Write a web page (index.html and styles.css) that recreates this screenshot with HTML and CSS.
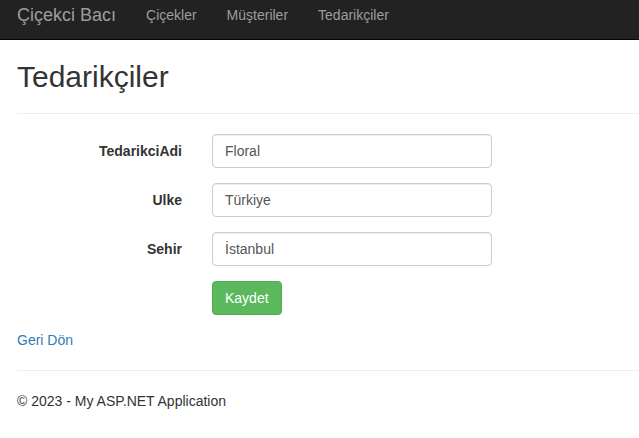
FILE: index.html
```html
<!DOCTYPE html>
<html lang="tr">
<head>
  <meta charset="UTF-8" />
  <title>Tedarikçiler - Çiçekci Bacı</title>
  <link rel="stylesheet" href="styles.css">
</head>
<body>
  <div class="navbar">
    <a class="navbar-brand" href="#">Çiçekci Bacı</a>
    <ul class="navbar-nav">
      <li><a href="#">Çiçekler</a></li>
      <li><a href="#">Müşteriler</a></li>
      <li><a href="#">Tedarikçiler</a></li>
    </ul>
  </div>

  <div class="body-content">
    <h2>Tedarikçiler</h2>
    <hr />

    <form class="form-horizontal">
      <div class="form-group">
        <label class="control-label" for="TedarikciAdi">TedarikciAdi</label>
        <input class="form-control" type="text" id="TedarikciAdi" value="Floral" />
      </div>
      <div class="form-group">
        <label class="control-label" for="Ulke">Ulke</label>
        <input class="form-control" type="text" id="Ulke" value="Türkiye" />
      </div>
      <div class="form-group">
        <label class="control-label" for="Sehir">Sehir</label>
        <input class="form-control" type="text" id="Sehir" value="İstanbul" />
      </div>
      <div class="form-group">
        <span></span>
        <div><button type="button" class="btn btn-success">Kaydet</button></div>
      </div>
    </form>

    <div>
      <a href="#">Geri Dön</a>
    </div>

    <hr />
    <footer>
      <p>&copy; 2023 - My ASP.NET Application</p>
    </footer>
  </div>
</body>
</html>
```

FILE: styles.css
```css
* { box-sizing: border-box; }
body {
  margin: 0; font-family: "Liberation Sans", Arial, sans-serif;
  font-size: 14px; line-height: 20px; color: #333; background: #fff;
}
a { color: #337ab7; text-decoration: none; }

.navbar {
  display: flex; height: 40px; padding-left: 2px;
  background: #222; border-bottom: 1px solid #080808;
}
.navbar-brand {
  padding: 5px 15px 14px; font-size: 18px; line-height: 20px; color: #9d9d9d;
}
.navbar-nav { display: flex; list-style: none; margin: 0; padding: 0; }
.navbar-nav a { display: block; padding: 5px 15px 14px; color: #9d9d9d; }

.body-content { padding: 0 0 0 17px; }
h2 { font-size: 30px; font-weight: 500; line-height: 33px; margin: 20px 0 10px; }
hr { margin: 20px 0; border: 0; border-top: 1px solid #eee; }

.form-group {
  display: grid; grid-template-columns: 165px 280px; column-gap: 30px;
  margin-bottom: 15px;
}
.control-label { text-align: right; font-weight: bold; padding-top: 7px; }
.form-control {
  height: 34px; width: 280px; padding: 6px 12px; font: inherit; font-size: 14px; color: #555;
  border: 1px solid #ccc; border-radius: 4px; box-shadow: inset 0 1px 1px rgba(0,0,0,0.075);
}
.btn {
  height: 34px; padding: 6px 12px; font: inherit; font-size: 14px; line-height: 20px;
  border: 1px solid transparent; border-radius: 4px; cursor: pointer;
}
.btn-success { color: #fff; background: #5cb85c; border-color: #4cae4c; }

footer p { margin: 0 0 10px; }
```
